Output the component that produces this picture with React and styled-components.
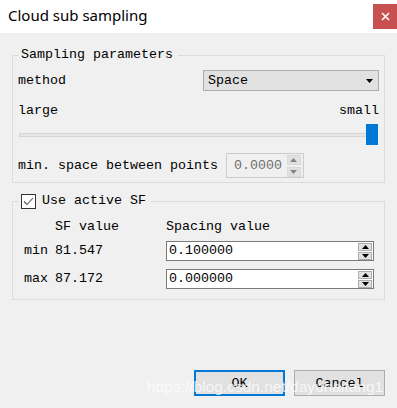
import React from "react";
import styled, { createGlobalStyle } from "styled-components";

const GlobalStyle = createGlobalStyle`
	html, body {
		margin: 0;
		padding: 0;
		background: #f0f0f0;
	}
	* {
		box-sizing: border-box;
	}
`;

const Window = styled.div`
	position: relative;
	width: 397px;
	height: 408px;
	display: flex;
	flex-direction: column;
	background: #f0f0f0;
	font-family: "Liberation Mono", "DejaVu Sans Mono", monospace;
	font-size: 13.33px;
	color: #000;
	overflow: hidden;
`;

const TitleBar = styled.div`
	height: 33px;
	display: flex;
	align-items: flex-start;
	justify-content: space-between;
	background: #fff;
	padding-left: 8px;
`;

const Title = styled.div`
	font-family: "Noto Sans", "Open Sans", sans-serif;
	font-size: 15px;
	line-height: 30px;
	color: #000;
`;

const CloseButton = styled.div`
	width: 24px;
	height: 25px;
	margin-top: 4px;
	display: flex;
	align-items: center;
	justify-content: center;
	background: #c75050;
`;

const Content = styled.div`
	flex: 1;
	display: flex;
	flex-direction: column;
	padding: 0 12px 12px;
`;

const Group = styled.fieldset`
	margin: ${(p) => p.$top}px 0 0;
	padding: 0 5px ${(p) => p.$bottom}px;
	border: 1px solid #dcdcdc;
	min-width: 0;
`;

const Legend = styled.legend`
	display: flex;
	align-items: center;
	gap: 6px;
	margin-left: 1px;
	padding: 0 5px 0 2px;
	line-height: 16px;
	height: 16px;
`;

const Row = styled.div`
	display: flex;
	align-items: center;
	justify-content: ${(p) => p.$justify || "space-between"};
	gap: ${(p) => p.$gap || 0}px;
	height: ${(p) => p.$h}px;
	margin-top: ${(p) => p.$mt}px;
	line-height: 16px;
`;

const Combo = styled.div`
	width: 176px;
	height: 21px;
	display: flex;
	align-items: center;
	justify-content: space-between;
	padding: 0 5px 0 4px;
	background: #e1e1e1;
	border: 1px solid #adadad;
`;

const Slider = styled.div`
	height: 21px;
	margin-top: 5px;
	display: flex;
	align-items: center;
	padding-left: 1px;
`;

const Groove = styled.div`
	flex: 1;
	height: 4px;
	background: #e7e7e7;
	border: 1px solid #d6d6d6;
`;

const Handle = styled.div`
	width: 12px;
	height: 21px;
	background: #0078d7;
	margin: 0 1px 0 -1px;
`;

const SpinBox = styled.div`
	width: ${(p) => p.$w}px;
	height: ${(p) => p.$h}px;
	display: flex;
	align-items: center;
	justify-content: space-between;
	padding: 0 1px 0 ${(p) => (p.$disabled ? 7 : 2)}px;
	background: ${(p) => (p.$disabled ? "#f0f0f0" : "#fff")};
	border: 1px solid ${(p) => (p.$disabled ? "#cccccc" : "#7a7a7a")};
	color: ${(p) => (p.$disabled ? "#6d6d6d" : "#000")};
`;

const SpinButtons = styled.div`
	display: flex;
	flex-direction: column;
	gap: ${(p) => (p.$disabled ? 2 : 1)}px;
	margin-right: ${(p) => (p.$disabled ? 1 : 0)}px;
`;

const SpinArrow = styled.div`
	width: 14px;
	height: ${(p) => p.$h}px;
	display: flex;
	align-items: center;
	justify-content: center;
	background: #e1e1e1;
	border: 1px solid ${(p) => (p.$disabled ? "#d9d9d9" : "#adadad")};
`;

const Check = styled.div`
	width: 15px;
	height: 15px;
	border: 1px solid #333;
	background: #fff;
	display: flex;
	align-items: center;
	justify-content: center;
`;

const Table = styled.div`
	display: grid;
	grid-template-columns: 31px 111px 208px;
	grid-template-rows: 12px 20px 20px;
	row-gap: 8px;
	align-items: center;
	padding-left: 6px;
	margin-top: 12px;
	line-height: 16px;
`;

const Spacer = styled.div`
	flex: 1;
`;

const ButtonRow = styled.div`
	display: flex;
	justify-content: flex-end;
	gap: 9px;
`;

const Button = styled.div`
	width: 91px;
	height: 26px;
	display: flex;
	align-items: center;
	justify-content: center;
	background: #e1e1e1;
	border: ${(p) => (p.$default ? "2px solid #0078d7" : "1px solid #adadad")};
`;

const Watermark = styled.div`
	position: absolute;
	left: 147px;
	top: 378px;
	font-family: "Liberation Sans", Arial, sans-serif;
	font-size: 15.5px;
	color: rgba(255, 255, 255, 0.75);
	white-space: nowrap;
	pointer-events: none;
`;

const Triangle = ({ up, color = "#000" }) => (
	<svg width="7" height="4" viewBox="0 0 7 4">
		<path d={up ? "M0 4 L3.5 0 L7 4 Z" : "M0 0 L7 0 L3.5 4 Z"} fill={color} />
	</svg>
);

const Spin = ({ value, width, height, disabled }) => (
	<SpinBox $w={width} $h={height} $disabled={disabled}>
		<span>{value}</span>
		<SpinButtons $disabled={disabled}>
			<SpinArrow $h={disabled ? 10 : 8} $disabled={disabled}>
				<Triangle up color={disabled ? "#838383" : "#000"} />
			</SpinArrow>
			<SpinArrow $h={disabled ? 10 : 8} $disabled={disabled}>
				<Triangle color={disabled ? "#838383" : "#000"} />
			</SpinArrow>
		</SpinButtons>
	</SpinBox>
);

const App = () => {
	return (
		<Window>
			<GlobalStyle />
			<TitleBar>
				<Title>Cloud sub sampling</Title>
				<CloseButton>
					<svg width="9" height="9" viewBox="0 0 9 9">
						<path d="M1 1 L8 8 M8 1 L1 8" stroke="#fff" strokeWidth="1.6" />
					</svg>
				</CloseButton>
			</TitleBar>
			<Content>
				<Group $top={14} $bottom={4}>
					<Legend>Sampling parameters</Legend>
					<Row $h={21} $mt={7}>
						<span>method</span>
						<Combo>
							<span>Space</span>
							<Triangle />
						</Combo>
					</Row>
					<Row $h={16} $mt={12}>
						<span>large</span>
						<span>small</span>
					</Row>
					<Slider>
						<Groove />
						<Handle />
					</Slider>
					<Row $h={25} $mt={8} $justify="flex-start" $gap={8}>
						<span>min. space between points</span>
						<Spin value="0.0000" width={78} height={25} disabled />
					</Row>
				</Group>
				<Group $top={10} $bottom={10}>
					<Legend>
						<Check>
							<svg width="11" height="9" viewBox="0 0 11 9">
								<path d="M1 4.5 L4 7.5 L10 1" stroke="#555" strokeWidth="1.1" fill="none" />
							</svg>
						</Check>
						<span>Use active SF</span>
					</Legend>
					<Table>
						<span />
						<span>SF value</span>
						<span>Spacing value</span>
						<span>min</span>
						<span>81.547</span>
						<Spin value="0.100000" width={208} height={20} />
						<span>max</span>
						<span>87.172</span>
						<Spin value="0.000000" width={208} height={20} />
					</Table>
				</Group>
				<Spacer />
				<ButtonRow>
					<Button $default>OK</Button>
					<Button>Cancel</Button>
				</ButtonRow>
			</Content>
			<Watermark>https://blog.csdn.net/dayuhaitang1</Watermark>
		</Window>
	);
};

export default App;
